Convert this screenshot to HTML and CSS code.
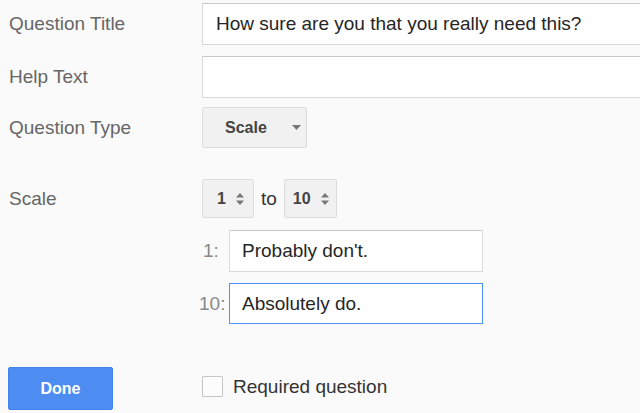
FILE: index.html
```html
<!DOCTYPE html>
<html>
<head>
<meta charset="utf-8">
<link rel="stylesheet" href="styles.css">
</head>
<body>
<div class="form">
  <div class="row row-title">
    <div class="lbl">Question Title</div>
    <div class="input wide"><span class="val">How sure are you that you really need this?</span></div>
  </div>
  <div class="row row-help">
    <div class="lbl">Help Text</div>
    <div class="input wide"></div>
  </div>
  <div class="row row-type">
    <div class="lbl">Question Type</div>
    <div class="select">
      <span class="sel-text">Scale</span>
      <svg class="caret" width="9" height="5" viewBox="0 0 9 5"><path d="M0 0h9L4.5 5z" fill="#777"/></svg>
    </div>
  </div>
  <div class="row row-scale">
    <div class="lbl">Scale</div>
    <div class="scale">
      <div class="spin spin-a">
        <span class="spin-val">1</span>
        <svg class="updown" width="8" height="12" viewBox="0 0 8 12"><path d="M0 4.5L4 0l4 4.5z M0 7.5h8L4 12z" fill="#777"/></svg>
      </div>
      <span class="to">to</span>
      <div class="spin spin-b">
        <span class="spin-val">10</span>
        <svg class="updown" width="8" height="12" viewBox="0 0 8 12"><path d="M0 4.5L4 0l4 4.5z M0 7.5h8L4 12z" fill="#777"/></svg>
      </div>
    </div>
  </div>
  <div class="row row-sub1">
    <div class="lbl"></div>
    <div class="sub">
      <span class="sub-lbl">1:</span>
      <div class="input small"><span class="val">Probably don't.</span></div>
    </div>
  </div>
  <div class="row row-sub2">
    <div class="lbl"></div>
    <div class="sub">
      <span class="sub-lbl tight">10:</span>
      <div class="input small focus"><span class="val">Absolutely do.</span></div>
    </div>
  </div>
  <div class="row row-foot">
    <div class="lbl"><button class="done">Done</button></div>
    <label class="req"><span class="box"></span><span class="req-text">Required question</span></label>
  </div>
</div>
</body>
</html>
```

FILE: styles.css
```css
html, body {
  margin: 0;
  padding: 0;
  background: #fafafa;
  overflow: hidden;
  width: 640px;
  height: 413px;
}
body {
  font-family: "Liberation Sans", Arial, sans-serif;
  font-size: 19px;
  color: #333;
}
.form {
  padding-top: 3px;
  padding-left: 9px;
  display: flex;
  flex-direction: column;
}
.row {
  display: grid;
  grid-template-columns: 193px 1fr;
  align-items: center;
}
.lbl {
  color: #666;
  white-space: nowrap;
}
.input {
  box-sizing: border-box;
  height: 42px;
  background: #fff;
  border: 1px solid #d9d9d9;
  border-top-color: #c8c8c8;
  display: flex;
  align-items: center;
  padding-left: 13px;
  color: #262626;
  white-space: nowrap;
  overflow: hidden;
}
.input.wide {
  width: 100%;
  border-right: none;
}
.row-help { margin-top: 11px; }
.row-type { margin-top: 9px; }
.row-scale { margin-top: 31px; }
.row-sub1 { margin-top: 12px; }
.row-sub2 { margin-top: 11px; }
.row-foot { margin-top: 43px; }

.select {
  box-sizing: border-box;
  width: 105px;
  height: 41px;
  background: #f1f1f1;
  border: 1px solid #dcdcdc;
  border-radius: 2px;
  display: flex;
  align-items: center;
  padding-left: 22px;
  font-size: 16px;
  font-weight: bold;
  color: #444;
}
.caret { margin-left: 25px; }

.scale {
  display: flex;
  align-items: center;
}
.spin {
  box-sizing: border-box;
  height: 39px;
  background: #f1f1f1;
  border: 1px solid #dcdcdc;
  border-radius: 2px;
  display: flex;
  align-items: center;
  font-size: 16px;
  font-weight: bold;
  color: #444;
}
.spin-a { width: 52px; padding-left: 14px; }
.spin-b { width: 53px; padding-left: 8px; }
.updown { margin-left: 10px; margin-top: 1px; }
.spin-b .updown { margin-left: 10px; }
.to {
  margin: 0 7px 0 7px;
  color: #333;
}

.sub {
  display: flex;
  align-items: center;
}
.sub-lbl {
  width: 27px;
  color: #888;
  padding-left: 1px;
  box-sizing: border-box;
}
.sub-lbl.tight { padding-left: 0; margin-left: -3px; width: 30px; }
.input.small {
  width: 254px;
  padding-left: 12px;
}
.row-sub2 .input.small { height: 41px; }
.input.focus {
  border: 1px solid #4d90fe;
}

.done {
  box-sizing: border-box;
  width: 105px;
  height: 43px;
  margin-left: -1px;
  background: #4d8cf1;
  border: 1px solid #4083ea;
  border-radius: 2px;
  color: #fff;
  font-family: "Liberation Sans", Arial, sans-serif;
  font-size: 16px;
  font-weight: bold;
  padding: 0;
}
.req {
  display: flex;
  align-items: center;
  margin-top: -4px;
}
.box {
  box-sizing: border-box;
  width: 21px;
  height: 21px;
  border: 1px solid #c6c6c6;
  background: #fcfcfc;
  border-radius: 1px;
}
.req-text {
  margin-left: 10px;
  color: #333;
}
```
